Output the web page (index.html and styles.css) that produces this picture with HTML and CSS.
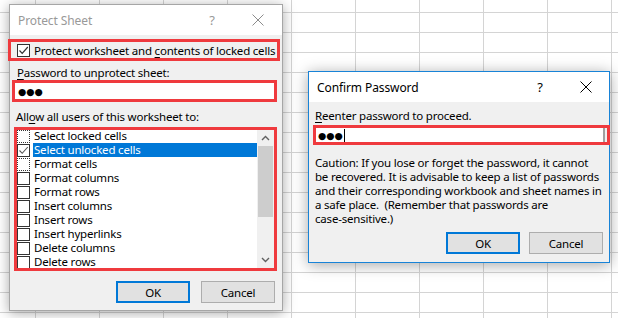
FILE: index.html
```html
<!DOCTYPE html>
<html>
<head>
<meta charset="utf-8">
<link rel="stylesheet" href="styles.css">
</head>
<body>
<div class="sheet">
  <div class="dialog protect">
    <div class="titlebar inactive">
      <span class="title">Protect Sheet</span>
      <span class="help">?</span>
      <svg class="close" width="12" height="12" viewBox="0 0 12 12"><path d="M0.5 0.5 L11.5 11.5 M11.5 0.5 L0.5 11.5" stroke="currentColor" stroke-width="1" fill="none"/></svg>
    </div>
    <div class="body">
      <div class="mark mark-check">
        <span class="cb checked"><svg width="11" height="11" viewBox="0 0 11 11"><path d="M1.5 5.5 L4.2 8.3 L9.8 2" stroke="#333" stroke-width="1.2" fill="none"/></svg></span>
        <span>Protect worksheet and <u>c</u>ontents of locked cells</span>
      </div>
      <div class="label lbl-pw"><u>P</u>assword to unprotect sheet:</div>
      <div class="mark mark-pw">
        <div class="input"><span class="dots">●●●</span></div>
      </div>
      <div class="label lbl-allow">All<u>o</u>w all users of this worksheet to:</div>
      <div class="mark mark-list">
        <div class="listbox">
          <div class="items">
            <div class="item"><span class="cb dotted"></span><span class="txt">Select locked cells</span></div>
            <div class="item sel"><span class="cb checked-gray"><svg width="11" height="11" viewBox="0 0 11 11"><path d="M1.5 5.5 L4.2 8.3 L9.8 2" stroke="#555" stroke-width="1.1" fill="none"/></svg></span><span class="txt">Select unlocked cells</span></div>
            <div class="item"><span class="cb dotted"></span><span class="txt">Format cells</span></div>
            <div class="item"><span class="cb"></span><span class="txt">Format columns</span></div>
            <div class="item"><span class="cb"></span><span class="txt">Format rows</span></div>
            <div class="item"><span class="cb"></span><span class="txt">Insert columns</span></div>
            <div class="item"><span class="cb"></span><span class="txt">Insert rows</span></div>
            <div class="item"><span class="cb"></span><span class="txt">Insert hyperlinks</span></div>
            <div class="item"><span class="cb"></span><span class="txt">Delete columns</span></div>
            <div class="item"><span class="cb"></span><span class="txt">Delete rows</span></div>
          </div>
          <div class="scrollbar">
            <svg class="arrow" width="9" height="6" viewBox="0 0 9 6"><path d="M1 5 L4.5 1.5 L8 5" stroke="#606060" stroke-width="1.4" fill="none"/></svg>
            <div class="thumb"></div>
            <div class="track"></div>
            <svg class="arrow" width="9" height="6" viewBox="0 0 9 6"><path d="M1 1 L4.5 4.5 L8 1" stroke="#606060" stroke-width="1.4" fill="none"/></svg>
          </div>
        </div>
      </div>
      <div class="buttons">
        <div class="btn default">OK</div>
        <div class="btn">Cancel</div>
      </div>
    </div>
  </div>

  <div class="dialog confirm">
    <div class="titlebar">
      <span class="title">Confirm Password</span>
      <span class="help">?</span>
      <svg class="close" width="12" height="12" viewBox="0 0 12 12"><path d="M0.5 0.5 L11.5 11.5 M11.5 0.5 L0.5 11.5" stroke="currentColor" stroke-width="1" fill="none"/></svg>
    </div>
    <div class="body">
      <div class="label lbl-re"><u>R</u>eenter password to proceed.</div>
      <div class="mark mark-re">
        <div class="input"><span class="dots">●●●</span><span class="caret"></span></div>
      </div>
      <p class="caution">Caution: If you lose or forget the password, it cannot<br>be recovered. It is advisable to keep a list of passwords<br>and their corresponding workbook and sheet names in<br>a safe place.&nbsp; (Remember that passwords are<br>case-sensitive.)</p>
      <div class="buttons">
        <div class="btn default">OK</div>
        <div class="btn">Cancel</div>
      </div>
    </div>
  </div>
</div>
</body>
</html>
```
FILE: styles.css
```css
* { box-sizing: border-box; }
html, body { margin: 0; padding: 0; }
body {
  width: 618px;
  height: 318px;
  overflow: hidden;
  font-family: "Noto Sans", "Open Sans", sans-serif;
  font-size: 11.5px;
  letter-spacing: -0.2px;
  color: #000;
  white-space: nowrap;
}
.sheet {
  position: relative;
  width: 618px;
  height: 318px;
  background-color: #fff;
  background-image:
    linear-gradient(to right, #d4d4d4 1px, transparent 1px),
    linear-gradient(to bottom, #d4d4d4 1px, transparent 1px);
  background-size: 64px 20px;
  background-position: 35px 12px;
}
.dialog {
  position: absolute;
  background: #f0f0f0;
  display: flex;
  flex-direction: column;
}
.protect {
  left: 9px;
  top: 4px;
  width: 274px;
  height: 307px;
  border: 1px solid #a6a6a6;
  box-shadow: 0 2px 12px rgba(0,0,0,0.35);
}
.confirm {
  left: 308px;
  top: 71px;
  width: 302px;
  height: 192px;
  border: 1px solid #1883d7;
  box-shadow: 0 2px 14px rgba(0,0,0,0.35);
}
.titlebar {
  background: #fff;
  display: flex;
  align-items: center;
  flex: none;
  height: 30px;
  padding-left: 8px;
}
.titlebar.inactive { color: #999; }
.title { flex: 1; font-size: 12px; letter-spacing: -0.1px; }
.help { font-size: 13px; width: 12px; text-align: center; }
.protect .help { margin-right: 34px; color: #999; }
.protect .close { margin-right: 18px; color: #8c8c8c; }
.confirm .help { margin-right: 34px; }
.confirm .close { margin-right: 17px; color: #000; }

.body { display: flex; flex-direction: column; }

.mark { border: 3px solid #ef3a3e; }
.label { line-height: 14px; }
u { text-decoration: underline; text-underline-offset: 2px; }

.mark-check {
  margin: 4px 0 0 -2px;
  width: 272px;
  height: 22px;
  display: flex;
  align-items: center;
  padding-left: 6px;
  gap: 4px;
}
.cb {
  width: 13px;
  height: 13px;
  border: 1px solid #333;
  background: #fff;
  display: flex;
  align-items: center;
  justify-content: center;
  flex: none;
}
.lbl-pw { margin: 5px 0 0 7px; }
.mark-pw {
  margin: 0 0 0 2px;
  width: 265px;
  height: 22px;
}
.input {
  height: 100%;
  background: #fff;
  display: flex;
  align-items: center;
  padding-left: 3px;
}
.dots { font-family: "DejaVu Sans", sans-serif; font-size: 9.5px; letter-spacing: 0px; }
.lbl-allow { margin: 8px 0 0 6px; }
.mark-list {
  margin: 3px 0 0 4px;
  width: 263px;
  height: 144px;
}
.listbox {
  height: 100%;
  background: #fff;
  display: flex;
  overflow: hidden;
}
.items { flex: 1; margin-top: -1px; }
.item {
  height: 14px;
  display: flex;
  align-items: center;
  gap: 3px;
}
.item .txt { flex: 1; line-height: 14px; padding-left: 1px; }
.item.sel .txt { background: #0078d7; color: #fff; }
.cb.dotted { border: 1px dotted #333; }
.scrollbar {
  width: 17px;
  background: #f0f0f0;
  display: flex;
  flex-direction: column;
  align-items: center;
}
.scrollbar .arrow { margin: 5px 0 5px; flex: none; }
.thumb { width: 15px; height: 71px; background: #cdcdcd; flex: none; }
.track { flex: 1; }

.buttons {
  display: flex;
  justify-content: flex-end;
  gap: 11px;
}
.btn {
  width: 74px;
  height: 22px;
  border: 1px solid #adadad;
  background: #e1e1e1;
  display: flex;
  align-items: center;
  justify-content: center;
}
.btn.default { border: 2px solid #0078d7; }
.protect .buttons { margin-top: 10px; padding-right: 7px; }

.lbl-re { margin: 7px 0 0 6px; }
.mark-re {
  margin: 2px 0 0 4px;
  width: 297px;
  height: 20px;
}
.mark-re .input { border-right: 2px solid #a0a0a0; margin-right: 2px; padding-left: 2px; }
.caret { width: 1px; height: 13px; background: #000; margin-left: 1px; }
.caution {
  margin: 11px 0 0 6px;
  line-height: 14px;
}
.confirm .buttons { margin-top: 6px; padding-right: 6px; gap: 9px; }
```
